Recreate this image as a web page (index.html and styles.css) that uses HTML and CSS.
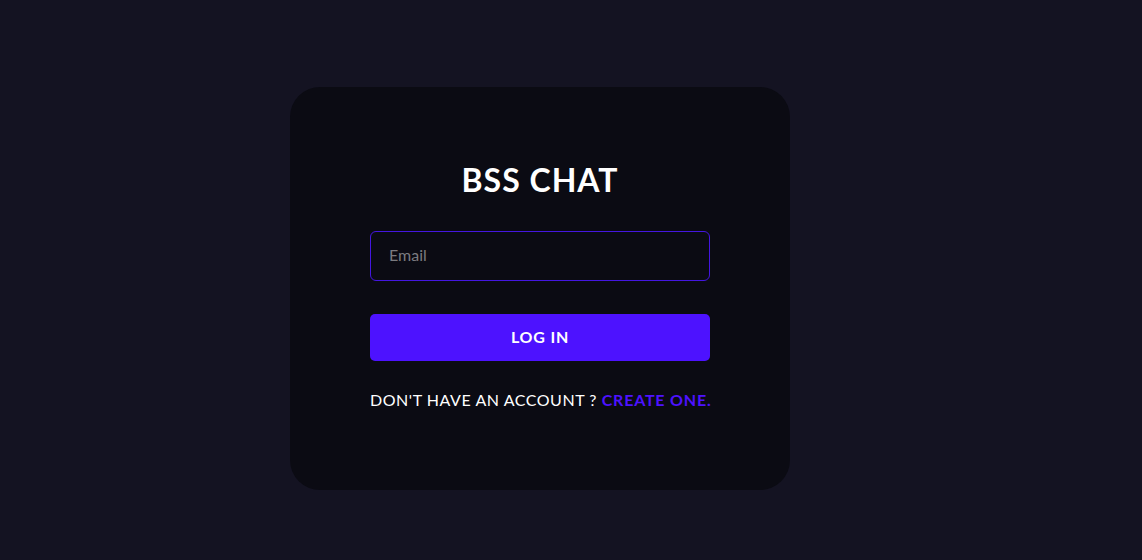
FILE: index.html
```html
<!DOCTYPE html>
<html>
<head>
<meta charset="utf-8">
<link rel="stylesheet" href="styles.css">
</head>
<body>
<div class="page">
  <div class="card">
    <h1 class="title">BSS CHAT</h1>
    <div class="input"><span class="placeholder">Email</span></div>
    <div class="button">LOG IN</div>
    <p class="note">DON'T HAVE AN ACCOUNT ? <span class="link">CREATE ONE.</span></p>
  </div>
</div>
</body>
</html>
```

FILE: styles.css
```css
html, body {
  margin: 0;
  padding: 0;
  background: #141322;
  font-family: "Lato", "Open Sans", sans-serif;
}
.page {
  height: 560px;
  box-sizing: border-box;
  padding: 87px 0 0 290px;
}
.card {
  width: 500px;
  height: 403px;
  box-sizing: border-box;
  background: #0b0b13;
  border-radius: 30px;
  padding: 0 80px;
  display: flex;
  flex-direction: column;
}
.title {
  margin: 73px 0 0;
  height: 40px;
  line-height: 40px;
  text-align: center;
  color: #ffffff;
  font-size: 32px;
  font-weight: 700;
  letter-spacing: 1px;
}
.input {
  margin-top: 31px;
  height: 50px;
  box-sizing: border-box;
  border: 1px solid #4416e0;
  border-radius: 6px;
  display: flex;
  align-items: center;
  padding: 0 0 3px 18px;
}
.placeholder {
  color: #7b7b80;
  font-size: 16px;
}
.button {
  margin-top: 33px;
  height: 47px;
  box-sizing: border-box;
  padding-bottom: 2px;
  border-radius: 5px;
  background: #4d12ff;
  color: #fff;
  font-size: 16px;
  font-weight: 700;
  letter-spacing: 0.8px;
  display: flex;
  align-items: center;
  justify-content: center;
}
.note {
  margin: 29px 0 0;
  color: #fff;
  font-size: 16px;
  line-height: 20px;
  white-space: nowrap;
  letter-spacing: 0.55px;
}
.link {
  color: #4d12ff;
  font-weight: 700;
  letter-spacing: 0.8px;
}
```
